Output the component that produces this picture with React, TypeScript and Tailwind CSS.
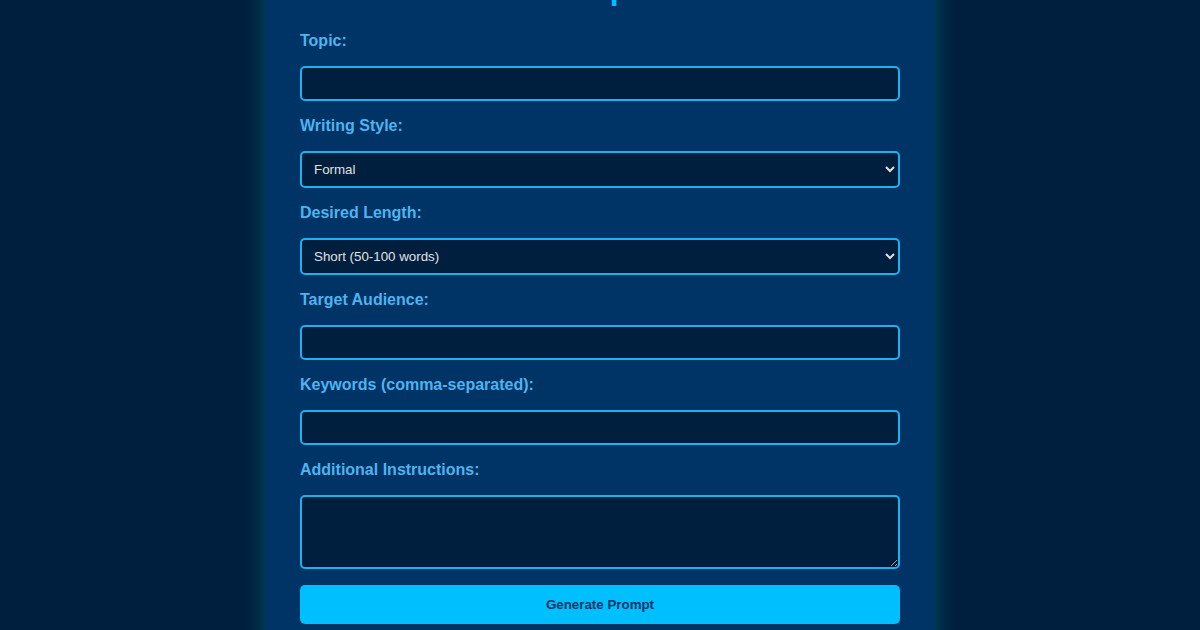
import React from "react";

export default function App() {
  const label = "block text-[16px] leading-[18px] font-bold text-[#4fb3ee] mb-[16px]";
  const field =
    "block w-full bg-[#001f3f] border-2 border-[#1fb1ee] rounded-[5px] text-[#e0e0e0] text-[13.33px] px-[12px] outline-none";
  return (
    <div
      className="w-[1200px] h-[630px] overflow-hidden bg-[#001f3f] flex justify-center"
      style={{ fontFamily: '"Liberation Sans", Arial, sans-serif' }}
    >
      <div className="w-[670px] mt-[-62px] bg-[#003366] px-[35px] pt-[32px] pb-[40px] rounded-[8px] shadow-[0_0_20px_rgba(0,255,200,0.25)] self-start">
        <h1 className="text-[32px] leading-[37px] font-bold text-[#00bfff] text-center mb-[25px]">
          Content Prompt Generator
        </h1>
        <div className="mb-[16px]">
          <label className={label}>Topic:</label>
          <input type="text" className={`${field} h-[35px]`} />
        </div>
        <div className="mb-[16px]">
          <label className={label}>Writing Style:</label>
          <select className={`${field} h-[37px] pl-[8px]`} defaultValue="Formal">
            <option>Formal</option>
            <option>Casual</option>
            <option>Persuasive</option>
          </select>
        </div>
        <div className="mb-[16px]">
          <label className={label}>Desired Length:</label>
          <select className={`${field} h-[37px] pl-[8px]`} defaultValue="Short (50-100 words)">
            <option>Short (50-100 words)</option>
            <option>Medium (100-300 words)</option>
            <option>Long (300+ words)</option>
          </select>
        </div>
        <div className="mb-[16px]">
          <label className={label}>Target Audience:</label>
          <input type="text" className={`${field} h-[35px]`} />
        </div>
        <div className="mb-[16px]">
          <label className={label}>Keywords (comma-separated):</label>
          <input type="text" className={`${field} h-[35px]`} />
        </div>
        <div className="mb-[16px]">
          <label className={label}>Additional Instructions:</label>
          <textarea className={`${field} h-[74px] py-[8px]`} />
        </div>
        <button className="block w-full h-[39px] bg-[#00bfff] rounded-[5px] text-[#003366] text-[13.33px] font-bold">
          Generate Prompt
        </button>
      </div>
    </div>
  );
}
